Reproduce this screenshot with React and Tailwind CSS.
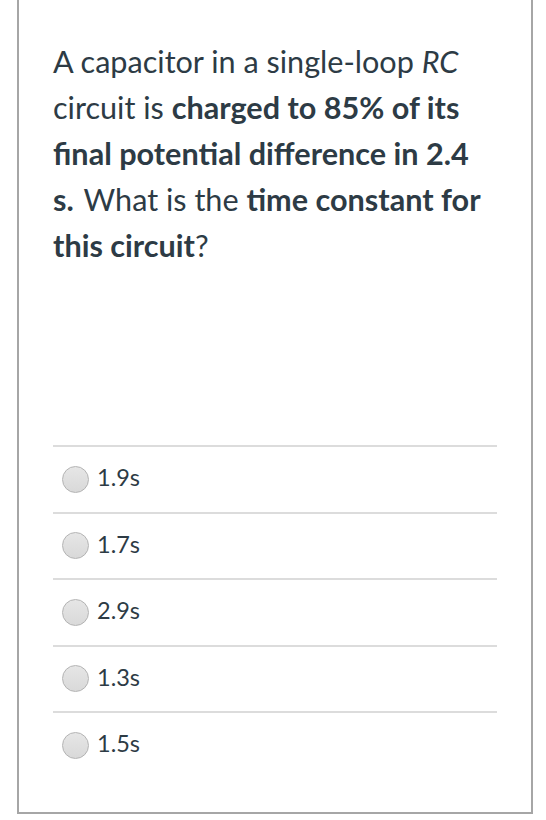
export default function App() {
  const options = ["1.9s", "1.7s", "2.9s", "1.3s", "1.5s"];
  return (
    <div className="w-[546px] h-[820px] bg-white" style={{ fontFamily: "Lato, 'Noto Sans', sans-serif" }}>
      <div className="ml-[17px] w-[516px] h-[814px] border-l-2 border-r-2 border-b-2 border-[#a6a6a6] px-[34px] pt-[39px] text-[#2d3b45]">
        <p className="w-[436px] text-[30.6px] leading-[46px]">
          A capacitor in a single-loop <i>RC</i> circuit is <b className="font-bold">charged to 85% of its final potential difference in 2.4 s.</b> <span className="ml-[2px]">What is the</span> <b className="font-bold">time constant for this circuit</b>?
        </p>
        <div className="mt-[176px]">
          {options.map((o) => (
            <div key={o} className="h-[66.5px] border-t-2 border-[#dcdcdc] flex items-center pl-[9px] gap-[8px]">
              <span className="w-[27px] h-[27px] rounded-full border border-[#b3b3b3] bg-gradient-to-b from-[#e6e6e6] to-[#d9d9d9] shrink-0" />
              <span className="text-[23.5px] leading-none pb-[3px]">{o}</span>
            </div>
          ))}
        </div>
      </div>
    </div>
  );
}
